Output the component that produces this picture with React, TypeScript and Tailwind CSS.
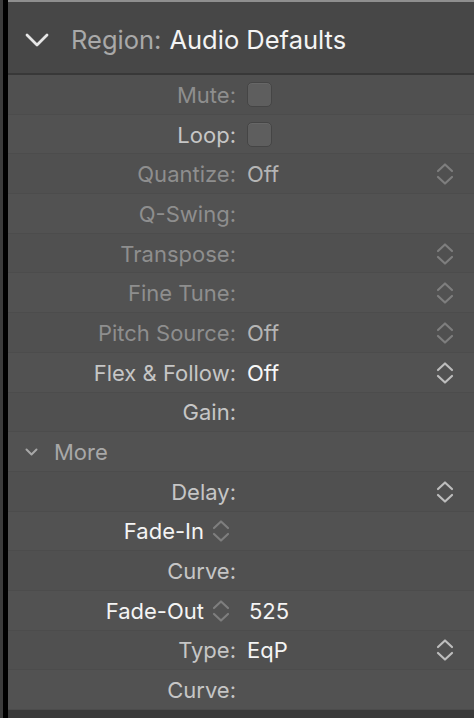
import React from "react";

type Tone = "dim" | "mid" | "bright";

const labelColor: Record<Tone, string> = {
  dim: "text-[#8e8e8e]",
  mid: "text-[#c6c6c6]",
  bright: "text-[#f4f4f4]",
};

function Stepper({ tone }: { tone: "dim" | "mid" }) {
  const c = tone === "dim" ? "#7e7e7e" : "#bdbdbd";
  return (
    <svg width="18" height="24" viewBox="0 0 18 24" fill="none">
      <path d="M2 9 L9 2.5 L16 9" stroke={c} strokeWidth="2.2" strokeLinecap="round" strokeLinejoin="round" />
      <path d="M2 15 L9 21.5 L16 15" stroke={c} strokeWidth="2.2" strokeLinecap="round" strokeLinejoin="round" />
    </svg>
  );
}

function Checkbox() {
  return <div className="h-[25px] w-[25px] rounded-[5px] border border-[#454545] bg-[#5e5e5e] shadow-[inset_0_1px_0_rgba(255,255,255,0.06)]" />;
}

type Row = {
  label: string;
  tone: Tone;
  value?: React.ReactNode;
  stepper?: "dim" | "mid";
  labelStepper?: boolean;
};

const rows: Row[] = [
  { label: "Mute:", tone: "dim", value: <Checkbox /> },
  { label: "Loop:", tone: "mid", value: <Checkbox /> },
  { label: "Quantize:", tone: "dim", value: <span className="text-[#b5b5b5]">Off</span>, stepper: "dim" },
  { label: "Q-Swing:", tone: "dim" },
  { label: "Transpose:", tone: "dim", stepper: "dim" },
  { label: "Fine Tune:", tone: "dim", stepper: "dim" },
  { label: "Pitch Source:", tone: "dim", value: <span className="text-[#b5b5b5]">Off</span>, stepper: "dim" },
  { label: "Flex & Follow:", tone: "mid", value: <span className="text-[#f7f7f7]">Off</span>, stepper: "mid" },
  { label: "Gain:", tone: "mid" },
];

const more: Row[] = [
  { label: "Delay:", tone: "mid", stepper: "mid" },
  { label: "Fade-In", tone: "bright", labelStepper: true },
  { label: "Curve:", tone: "mid" },
  { label: "Fade-Out", tone: "bright", labelStepper: true, value: <span className="ml-[2px] text-[#f4f4f4]">525</span> },
  { label: "Type:", tone: "mid", value: <span className="text-[#f4f4f4]">EqP</span>, stepper: "mid" },
  { label: "Curve:", tone: "mid" },
];

function RowView({ r, i }: { r: Row; i: number }) {
  return (
    <div
      className={`flex h-[39.7px] items-center border-b border-[#4c4c4c] pt-[1px] ${i % 2 === 0 ? "bg-[#505050]" : "bg-[#525252]"}`}
    >
      <div className={`flex w-[228px] shrink-0 items-center justify-end ${labelColor[r.tone]} ${r.labelStepper ? "pr-[6px]" : ""}`}>
        <span>{r.label}</span>
        {r.labelStepper && (
          <span className="ml-[8px] flex items-center">
            <Stepper tone="dim" />
          </span>
        )}
      </div>
      <div className="ml-[11px] flex flex-1 items-center">{r.value}</div>
      {r.stepper && (
        <div className="mr-[20px] flex items-center">
          <Stepper tone={r.stepper} />
        </div>
      )}
    </div>
  );
}

export default function App() {
  return (
    <div
      className="flex h-[718px] w-[474px] overflow-hidden bg-[#3a3a3a] text-[22px] leading-none"
      style={{ fontFamily: "Inter, 'Noto Sans', sans-serif" }}
    >
      <div className="w-[3px] shrink-0 bg-[#3c3c3c]" />
      <div className="w-[5px] shrink-0 bg-black" />
      <div className="flex flex-1 flex-col">
        <div className="h-[2px] bg-[#8f8f8f]" />
        <div className="flex h-[73px] items-center border-b-[2px] border-[#383838] bg-[#474747] pl-[17px] pt-[4px]">
          <svg width="24" height="14" viewBox="0 0 24 14" fill="none" className="mr-[22px]">
            <path d="M2 2 L12 12 L22 2" stroke="#e6e6e6" strokeWidth="2.8" strokeLinecap="round" strokeLinejoin="round" />
          </svg>
          <span className="text-[25.5px] text-[#a9a9a9]">Region:</span>
          <span className="ml-[8px] text-[25.5px] text-[#f4f4f4]">Audio Defaults</span>
        </div>
        {rows.map((r, i) => (
          <RowView key={i} r={r} i={i} />
        ))}
        <div className="flex h-[39.7px] items-center border-b border-[#4c4c4c] bg-[#525252] pl-[17px] pt-[1px]">
          <svg width="13" height="8" viewBox="0 0 13 8" fill="none" className="mr-[16px]">
            <path d="M1.5 1.5 L6.5 6.5 L11.5 1.5" stroke="#a8a8a8" strokeWidth="2" strokeLinecap="round" strokeLinejoin="round" />
          </svg>
          <span className="text-[#a8a8a8]">More</span>
        </div>
        {more.map((r, i) => (
          <RowView key={i} r={r} i={i} />
        ))}
      </div>
    </div>
  );
}
